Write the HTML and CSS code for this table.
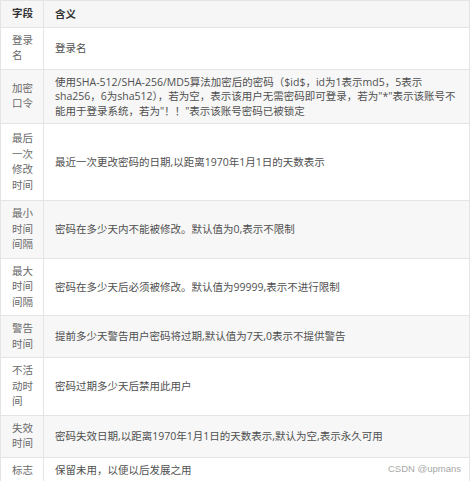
FILE: index.html
```html
<!DOCTYPE html>
<html lang="zh">
<head>
<meta charset="utf-8">
<link rel="stylesheet" href="styles.css">
</head>
<body>
<div class="wrap">
<table class="spec">
  <colgroup><col class="c1"><col class="c2"></colgroup>
  <thead>
    <tr><th>字段</th><th>含义</th></tr>
  </thead>
  <tbody>
    <tr><td>登录名</td><td>登录名</td></tr>
    <tr><td>加密口令</td><td>使用SHA-512/SHA-256/MD5算法加密后的密码（$id$，id为1表示md5，5表示sha256，6为sha512），若为空，表示该用户无需密码即可登录，若为"*"表示该账号不能用于登录系统，若为"！！"表示该账号密码已被锁定</td></tr>
    <tr class="tall"><td>最后一次修改时间</td><td>最近一次更改密码的日期,以距离1970年1月1日的天数表示</td></tr>
    <tr><td>最小时间间隔</td><td>密码在多少天内不能被修改。默认值为0,表示不限制</td></tr>
    <tr><td>最大时间间隔</td><td>密码在多少天后必须被修改。默认值为99999,表示不进行限制</td></tr>
    <tr><td>警告时间</td><td>提前多少天警告用户密码将过期,默认值为7天,0表示不提供警告</td></tr>
    <tr><td>不活动时间</td><td>密码过期多少天后禁用此用户</td></tr>
    <tr><td>失效时间</td><td>密码失效日期,以距离1970年1月1日的天数表示,默认为空,表示永久可用</td></tr>
    <tr><td>标志</td><td>保留未用，以便以后发展之用</td></tr>
  </tbody>
</table>
<span class="mark">CSDN @upmans</span>
</div>
</body>
</html>
```
FILE: styles.css
```css
html, body {
  margin: 0;
  padding: 0;
  background: #ffffff;
}
.wrap {
  position: relative;
  width: 474px;
  height: 481px;
  overflow: hidden;
}
.spec {
  border-collapse: collapse;
  table-layout: fixed;
  width: 470px;
  font-family: "Open Sans", "Noto Sans CJK SC", sans-serif;
  font-size: 10.5px;
  line-height: 14.5px;
  color: #4f4f4f;
}
.c1 { width: 43px; }
.spec th, .spec td {
  border: 1px solid #e4e4e4;
  padding: 5px 11px;
  text-align: left;
  vertical-align: middle;
  word-break: normal;
}
.spec th:first-child, .spec td:first-child {
  padding: 5px 9px 5px 11px;
  line-height: 15.5px;
  color: #6a6a6a;
}
.spec tr.tall td:first-child {
  padding-top: 7px;
  padding-bottom: 7px;
}
.spec th {
  font-weight: bold;
  color: #333333;
  background: #f6f6f6;
}
.spec th:first-child { color: #333333; }
.spec tbody tr:nth-child(2n) { background: #f7f7f7; }
.mark {
  position: absolute;
  right: 13px;
  bottom: 7px;
  font-family: "Liberation Sans", Arial, sans-serif;
  font-size: 9.5px;
  color: #a8a8a8;
}
```
